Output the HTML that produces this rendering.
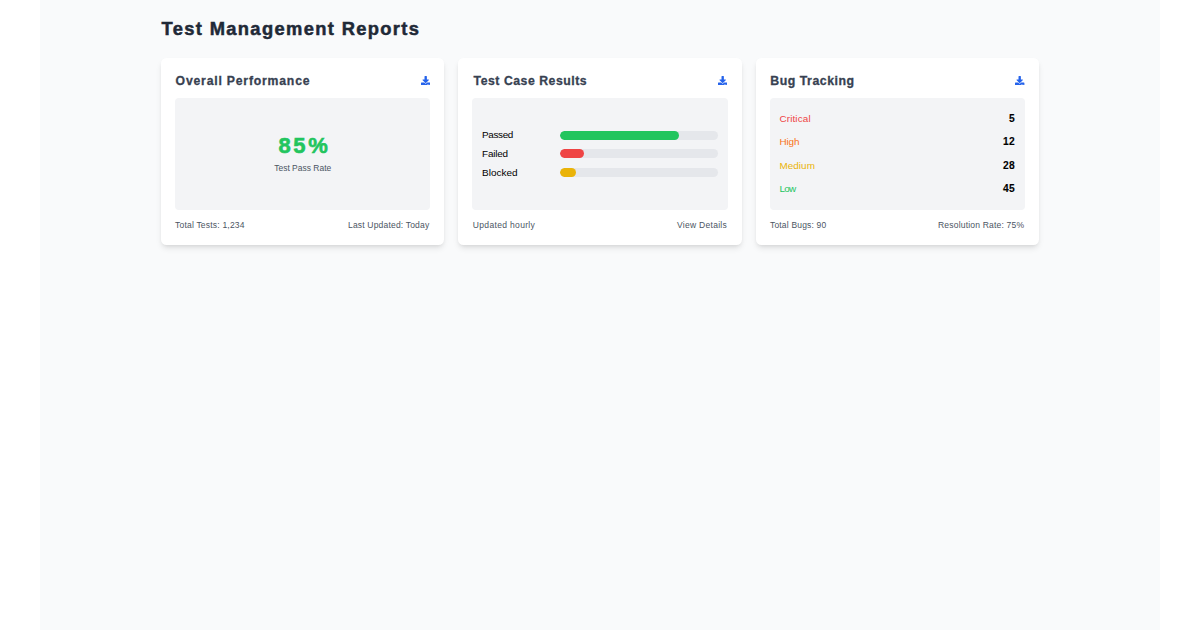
<!DOCTYPE html>
<html><head><meta charset="utf-8"><title>Test Management Reports</title>
<style>
html,body{margin:0;padding:0;background:#fff;width:1200px;height:630px;overflow:hidden;font-family:'Liberation Sans', sans-serif}
.page{position:absolute;left:40px;top:0;width:1120px;height:630px;background:#f9fafb}
.card{position:absolute;top:58px;height:187px;background:#fff;border-radius:5.5px;box-shadow:0 4px 6px -1px rgba(0,0,0,.1),0 2px 4px -2px rgba(0,0,0,.1)}
.box{position:absolute;top:98px;height:112px;background:#f3f4f6;border-radius:4px}
.t{position:absolute;white-space:nowrap;line-height:1}
.track{position:absolute;left:560px;width:158px;height:9.2px;background:#e5e7eb;border-radius:5px;overflow:hidden}
.fill{position:absolute;left:0;top:0;height:100%;border-radius:5px}
</style></head><body>
<div class="page"></div>
<div class="card" style="left:161px;width:283px"></div>
<div class="card" style="left:458px;width:284px"></div>
<div class="card" style="left:756px;width:283px"></div>
<div class="box" style="left:175px;width:255px"></div>
<div class="box" style="left:472px;width:256px"></div>
<div class="box" style="left:770px;width:255px"></div>
<div class="track" style="top:130.9px"><div class="fill" style="width:75%;background:#22c55e"></div></div>
<div class="track" style="top:149.3px"><div class="fill" style="width:15%;background:#ef4444"></div></div>
<div class="track" style="top:168.0px"><div class="fill" style="width:10%;background:#eab308"></div></div>
<svg viewBox="0 0 512 512" width="9.4" height="9.4" style="position:absolute;left:420.9px;top:75.8px;display:block"><path fill="#2563eb" d="M216 0h80c13.3 0 24 10.7 24 24v168h87.7c17.8 0 26.7 21.5 14.1 34.1L269.7 378.3c-7.5 7.5-19.8 7.5-27.3 0L90.1 226.1c-12.6-12.6-3.7-34.1 14.1-34.1H192V24c0-13.3 10.7-24 24-24zm296 376v112c0 13.3-10.7 24-24 24H24c-13.3 0-24-10.7-24-24V376c0-13.3 10.7-24 24-24h146.7l49 49c20.1 20.1 52.5 20.1 72.6 0l49-49H488c13.3 0 24 10.7 24 24zm-124 88c0-11-9-20-20-20s-20 9-20 20 9 20 20 20 20-9 20-20zm64 0c0-11-9-20-20-20s-20 9-20 20 9 20 20 20 20-9 20-20z"/></svg>
<svg viewBox="0 0 512 512" width="9.4" height="9.4" style="position:absolute;left:718.0px;top:75.8px;display:block"><path fill="#2563eb" d="M216 0h80c13.3 0 24 10.7 24 24v168h87.7c17.8 0 26.7 21.5 14.1 34.1L269.7 378.3c-7.5 7.5-19.8 7.5-27.3 0L90.1 226.1c-12.6-12.6-3.7-34.1 14.1-34.1H192V24c0-13.3 10.7-24 24-24zm296 376v112c0 13.3-10.7 24-24 24H24c-13.3 0-24-10.7-24-24V376c0-13.3 10.7-24 24-24h146.7l49 49c20.1 20.1 52.5 20.1 72.6 0l49-49H488c13.3 0 24 10.7 24 24zm-124 88c0-11-9-20-20-20s-20 9-20 20 9 20 20 20 20-9 20-20zm64 0c0-11-9-20-20-20s-20 9-20 20 9 20 20 20 20-9 20-20z"/></svg>
<svg viewBox="0 0 512 512" width="9.4" height="9.4" style="position:absolute;left:1015.2px;top:75.8px;display:block"><path fill="#2563eb" d="M216 0h80c13.3 0 24 10.7 24 24v168h87.7c17.8 0 26.7 21.5 14.1 34.1L269.7 378.3c-7.5 7.5-19.8 7.5-27.3 0L90.1 226.1c-12.6-12.6-3.7-34.1 14.1-34.1H192V24c0-13.3 10.7-24 24-24zm296 376v112c0 13.3-10.7 24-24 24H24c-13.3 0-24-10.7-24-24V376c0-13.3 10.7-24 24-24h146.7l49 49c20.1 20.1 52.5 20.1 72.6 0l49-49H488c13.3 0 24 10.7 24 24zm-124 88c0-11-9-20-20-20s-20 9-20 20 9 20 20 20 20-9 20-20zm64 0c0-11-9-20-20-20s-20 9-20 20 9 20 20 20 20-9 20-20z"/></svg>
<div class="t" style="left:161.5px;top:20px;font-size:18.34px;font-weight:700;letter-spacing:1.35px;color:#1f2937;-webkit-text-stroke:0.5px #1f2937">Test Management Reports</div>
<div class="t" style="left:175.6px;top:75px;font-size:12.22px;font-weight:700;letter-spacing:0.8px;color:#374151;-webkit-text-stroke:0.3px #374151">Overall Performance</div>
<div class="t" style="left:473.6px;top:75px;font-size:12.25px;font-weight:700;letter-spacing:0.525px;color:#374151;-webkit-text-stroke:0.3px #374151">Test Case Results</div>
<div class="t" style="left:770.3px;top:75px;font-size:12.31px;font-weight:700;letter-spacing:0.527px;color:#374151;-webkit-text-stroke:0.3px #374151">Bug Tracking</div>
<div class="t" style="left:278.5px;top:135px;font-size:21.99px;font-weight:700;letter-spacing:2.6px;color:#22c55e;-webkit-text-stroke:0.6px #22c55e">85%</div>
<div class="t" style="left:274.2px;top:164px;font-size:8.46px;font-weight:400;letter-spacing:0.015px;color:#4b5563">Test Pass Rate</div>
<div class="t" style="left:175.0px;top:221px;font-size:8.54px;font-weight:400;letter-spacing:0.194px;color:#4b5563">Total Tests: 1,234</div>
<div class="t" style="left:348.0px;top:221px;font-size:8.54px;font-weight:400;letter-spacing:0.172px;color:#4b5563">Last Updated: Today</div>
<div class="t" style="left:472.8px;top:221px;font-size:8.54px;font-weight:400;letter-spacing:0.323px;color:#4b5563">Updated hourly</div>
<div class="t" style="left:677.0px;top:221px;font-size:8.54px;font-weight:400;letter-spacing:0.273px;color:#4b5563">View Details</div>
<div class="t" style="left:770.0px;top:221px;font-size:8.47px;font-weight:400;letter-spacing:0.192px;color:#4b5563">Total Bugs: 90</div>
<div class="t" style="left:938.0px;top:221px;font-size:8.55px;font-weight:400;letter-spacing:0.174px;color:#4b5563">Resolution Rate: 75%</div>
<div class="t" style="left:482.1px;top:130px;font-size:9.92px;font-weight:400;letter-spacing:-0.36px;color:#000000">Passed</div>
<div class="t" style="left:482.1px;top:149px;font-size:9.92px;font-weight:400;letter-spacing:-0.2px;color:#000000">Failed</div>
<div class="t" style="left:482.1px;top:168px;font-size:9.97px;font-weight:400;letter-spacing:0.0px;color:#000000">Blocked</div>
<div class="t" style="left:779.4px;top:114px;font-size:9.92px;font-weight:400;letter-spacing:0.143px;color:#ef4444">Critical</div>
<div class="t" style="left:779.4px;top:137px;font-size:9.92px;font-weight:400;letter-spacing:-0.1px;color:#f97316">High</div>
<div class="t" style="left:779.4px;top:161px;font-size:9.92px;font-weight:400;letter-spacing:0.06px;color:#eab308">Medium</div>
<div class="t" style="left:779.4px;top:184px;font-size:9.92px;font-weight:400;letter-spacing:-0.75px;color:#22c55e">Low</div>
<div class="t" style="left:1009.0px;top:114px;font-size:10.24px;font-weight:700;letter-spacing:0px;color:#000000;-webkit-text-stroke:0.12px #000000">5</div>
<div class="t" style="left:1003.0px;top:137px;font-size:10.24px;font-weight:700;letter-spacing:0.2px;color:#000000;-webkit-text-stroke:0.12px #000000">12</div>
<div class="t" style="left:1003.0px;top:161px;font-size:10.24px;font-weight:700;letter-spacing:0.4px;color:#000000;-webkit-text-stroke:0.12px #000000">28</div>
<div class="t" style="left:1003.0px;top:184px;font-size:10.24px;font-weight:700;letter-spacing:0.4px;color:#000000;-webkit-text-stroke:0.12px #000000">45</div>
</body></html>
